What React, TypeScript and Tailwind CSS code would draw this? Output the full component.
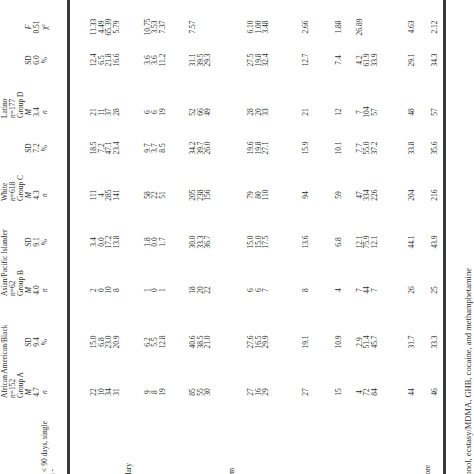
import type { ReactNode } from "react";

// column widths for the nine numeric columns (table is drawn upright, then turned a quarter turn)
const widths = ["w-[80px]", "w-[20px]", "w-[84px]", "w-[12px]", "w-[82px]", "w-[12px]", "w-[60px]", "w-[44px]", "w-[22px]"];

type Line = [string, string[]];

const block1: Line[] = [
  ["None", ["22", "15.0", "2", "3.4", "111", "18.5", "21", "12.4", "11.33"]],
  ["1–2 days", ["10", "6.8", "0", "0.0", "4", "7.2", "11", "6.5", "4.49"]],
  ["3–9 days", ["34", "23.0", "10", "17.2", "285", "47.1", "37", "21.8", "65.39"]],
  ["10 or more days", ["31", "20.9", "8", "13.8", "141", "23.4", "28", "16.6", "5.79"]],
];

const block2: Line[] = [
  ["Primary", ["9", "6.2", "1", "1.8", "58", "9.7", "6", "3.6", "10.75"]],
  ["Secondary", ["8", "5.5", "0", "0.0", "22", "3.7", "6", "3.6", "3.53"]],
  ["Both", ["19", "12.8", "1", "1.7", "51", "8.5", "19", "11.2", "7.37"]],
];

const block3: Line[] = [
  ["Alone", ["85", "40.6", "18", "30.0", "205", "34.2", "52", "31.1", "7.57"]],
  ["With friends", ["55", "38.5", "20", "33.3", "238", "39.7", "66", "39.5", ""]],
  ["With partner", ["30", "21.0", "22", "36.7", "156", "26.0", "49", "29.3", ""]],
];

const block4: Line[] = [
  ["Bar or club", ["27", "27.6", "6", "15.0", "79", "19.6", "28", "27.5", "6.10"]],
  ["Party", ["16", "16.5", "6", "15.0", "80", "19.8", "20", "19.8", "1.00"]],
  ["Home", ["29", "29.9", "7", "17.5", "110", "27.1", "33", "32.4", "3.48"]],
];

const block7: Line[] = [
  ["Never", ["4", "2.9", "7", "12.1", "47", "7.7", "7", "4.2", "26.89"]],
  ["Sometimes", ["72", "51.4", "44", "75.9", "334", "55.0", "104", "61.9", ""]],
  ["Always", ["84", "45.7", "7", "12.1", "226", "37.2", "57", "33.9", ""]],
];

function Cells({ v }: { v: ReactNode[] }) {
  return (
    <>
      {v.map((x, i) => (
        <div key={i} className={`${widths[i]} flex shrink-0 justify-center whitespace-nowrap`}>
          {x}
        </div>
      ))}
    </>
  );
}

function DataRow({ label, v }: { label: string; v: ReactNode[] }) {
  return (
    <div className="flex h-[7.5px] items-center">
      <div className="w-[208px] shrink-0 whitespace-nowrap pl-[6px]">{label}</div>
      <Cells v={v} />
    </div>
  );
}

function Block({ rows }: { rows: Line[] }) {
  return (
    <>
      {rows.map(([label, v]) => (
        <DataRow key={label} label={label} v={v} />
      ))}
    </>
  );
}

function Rule() {
  return <div className="h-[3px] w-[640px] bg-[#3a3a3a]" />;
}

export default function App() {
  return (
    <div className="h-[474px] w-[474px] overflow-hidden bg-white">
      <div className="h-[480px] w-[640px] origin-top-left translate-y-[640px] -rotate-90 pt-[1px] font-['Liberation_Serif',serif] text-[7.5px] leading-none text-[#2e2e2e]">
        {/* Group headings */}
        <div className="flex h-[8px] items-center whitespace-nowrap">
          <div className="w-[242px] shrink-0" />
          <div className="w-[102px] shrink-0">African American/Black</div>
          <div className="w-[95px] shrink-0">Asian/Pacific Islander</div>
          <div className="w-[83px] shrink-0">White</div>
          <div className="shrink-0">Latino</div>
        </div>
        <div className="flex h-[8px] items-center whitespace-nowrap">
          <div className="w-[242px] shrink-0" />
          <div className="w-[102px] shrink-0"><i>n</i>=152</div>
          <div className="w-[95px] shrink-0"><i>n</i>=62</div>
          <div className="w-[83px] shrink-0"><i>n</i>=618</div>
          <div className="shrink-0"><i>n</i>=177</div>
        </div>
        <div className="flex h-[8px] items-center whitespace-nowrap">
          <div className="w-[242px] shrink-0" />
          <div className="w-[102px] shrink-0">Group A</div>
          <div className="w-[95px] shrink-0">Group B</div>
          <div className="w-[83px] shrink-0">Group C</div>
          <div className="shrink-0">Group D</div>
        </div>
        <div className="flex h-[8px] items-center">
          <div className="w-[208px] shrink-0" />
          <Cells v={[<i>M</i>, "SD", <i>M</i>, "SD", <i>M</i>, "SD", <i>M</i>, "SD", <i>F</i>]} />
        </div>
        <div className="flex h-[8px] items-center">
          <div className="w-[208px] shrink-0" />
          <Cells v={["4.7", "9.4", "4.0", "9.1", "4.3", "7.2", "3.4", "6.0", "0.51"]} />
        </div>
        <div className="flex h-[8px] items-center">
          <div className="flex w-[208px] shrink-0 justify-end whitespace-nowrap">
            <span className="-mr-[11px]">Frequency of club drug use in past &lt; 90 days, single</span>
          </div>
          <Cells v={[<i>n</i>, "%", <i>n</i>, "%", <i>n</i>, "%", <i>n</i>, "%", "χ²"]} />
        </div>
        <div className="flex h-[8px] w-[208px] items-center justify-end whitespace-nowrap pr-[37px]">
          occasion or multiple occasions -
        </div>

        {/* top rule of the body */}
        <div className="h-[10px]" />
        <Rule />
        <div className="h-[20px]" />

        <Block rows={block1} />
        <div className="h-[5px]" />
        <div className="flex h-[7.5px] w-[208px] items-center justify-end whitespace-nowrap pr-[31px]">
          Setting of use, primary or secondary
        </div>
        <div className="h-[11px]" />
        <Block rows={block2} />
        <div className="h-[23px]" />
        <Block rows={block3} />
        <div className="h-[16px]" />
        <div className="flex h-[7.5px] w-[208px] items-center justify-end whitespace-nowrap pr-[36px]">
          Location of use, bar, party or home/dorm
        </div>
        <div className="h-[12px]" />
        <Block rows={block4} />
        <div className="h-[32px]" />
        <DataRow label="Sex under the influence" v={["27", "19.1", "8", "13.6", "94", "15.9", "21", "12.7", "2.66"]} />
        <div className="h-[26px]" />
        <DataRow label="Unprotected sex" v={["15", "10.9", "4", "6.8", "59", "10.1", "12", "7.4", "1.88"]} />
        <div className="h-[13px]" />
        <Block rows={block7} />
        <div className="h-[30px]" />
        <DataRow label="Polydrug use" v={["44", "31.7", "26", "44.1", "204", "33.8", "48", "29.1", "4.63"]} />
        <div className="h-[8px]" />
        <div className="flex h-[7.5px] w-[208px] items-center justify-end whitespace-nowrap pr-[33px]">
          Used two club drugs or more
        </div>
        <DataRow label="at the same time" v={["46", "33.3", "25", "43.9", "216", "35.6", "57", "34.3", "2.12"]} />

        {/* bottom rule */}
        <div className="h-[4px]" />
        <Rule />

        <div className="h-[18px]" />
        <div className="flex h-[9px] w-[372px] items-center justify-end whitespace-nowrap text-[8.5px]">
          <i>Note.</i>&nbsp;Club drugs include ketamine, LSD, Rohypnol, ecstasy/MDMA, GHB, cocaine, and methamphetamine
        </div>
      </div>
    </div>
  );
}
